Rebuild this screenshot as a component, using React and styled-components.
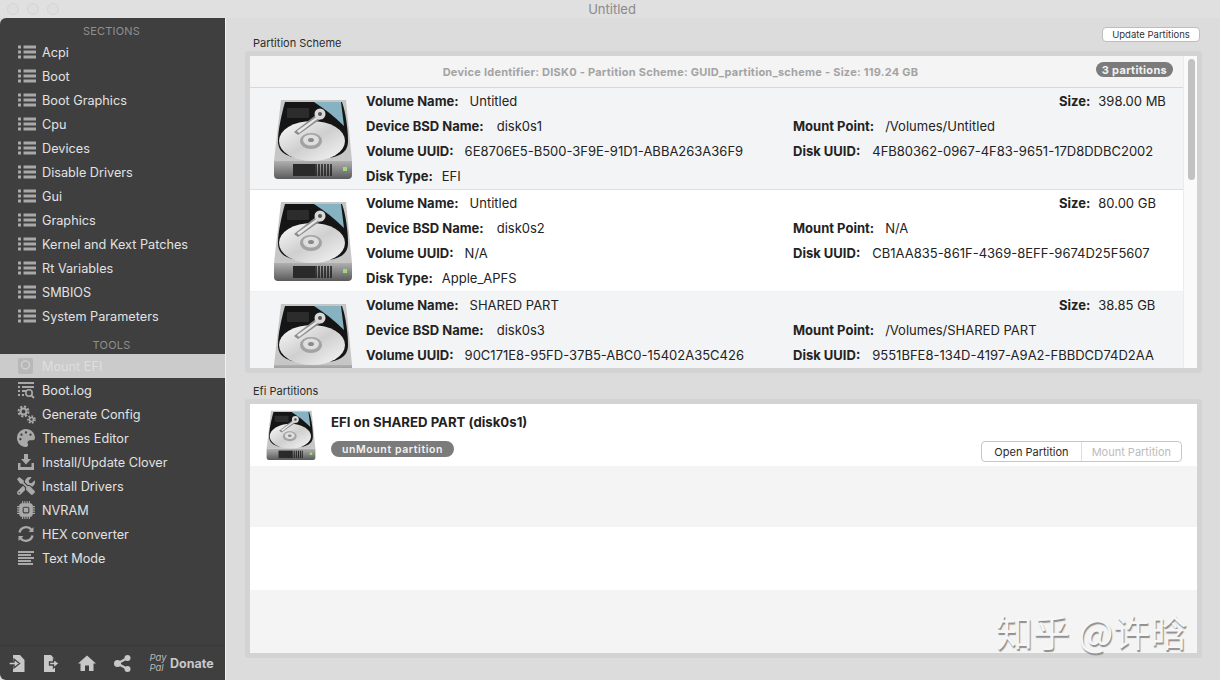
import React from 'react';
import styled, { createGlobalStyle } from 'styled-components';
import { FaPalette, FaTools } from 'react-icons/fa';
import { BsCpuFill } from 'react-icons/bs';

const GlobalStyle = createGlobalStyle`
  html, body {
    margin: 0;
    padding: 0;
    width: 100%;
    height: 100%;
    overflow: hidden;
    background: #dcdcdc;
  }
  * { box-sizing: border-box; }
`;

const Window = styled.div`
  width: 1220px;
  height: 680px;
  display: flex;
  flex-direction: column;
  position: relative;
  overflow: hidden;
  font-family: Inter, "Liberation Sans", sans-serif;
  color: #232323;
`;

const TitleBar = styled.div`
  height: 18px;
  flex: none;
  display: flex;
  align-items: center;
  justify-content: center;
  padding-left: 4px;
  position: relative;
  background: #e0e0e0;
  color: #8a8a8a;
  font-size: 13px;
`;

const Lights = styled.div`
  position: absolute;
  left: 7px;
  top: 3px;
  display: flex;
  gap: 8px;
`;

const Light = styled.span`
  width: 12px;
  height: 12px;
  border-radius: 50%;
  border: 1px solid #d4d4d4;
  background: #dedede;
`;

const Body = styled.div`
  flex: 1;
  display: flex;
  min-height: 0;
`;

const Sidebar = styled.aside`
  width: 226px;
  flex: none;
  display: flex;
  flex-direction: column;
  background: #3f3f3f;
  border-right: 1px solid #f0f0f0;
  border-radius: 6px 0 0 6px;
  color: #e4e4e4;
`;

const SideHead = styled.div`
  height: ${p => p.$h}px;
  display: flex;
  align-items: flex-end;
  justify-content: center;
  padding: 0 2px 2px 0;
  color: #8f8f8f;
  font-size: 11px;
  letter-spacing: 0.2px;
`;

const SideRow = styled.div`
  height: 24px;
  display: grid;
  grid-template-columns: 19px auto;
  align-items: center;
  justify-content: start;
  column-gap: 6px;
  padding-left: 17px;
  font-size: 12.7px;
  white-space: nowrap;
  background: ${p => (p.$active ? '#cbcbcb' : 'transparent')};
  color: ${p => (p.$active ? '#dedede' : '#e2e2e2')};
  svg { color: ${p => (p.$active ? '#b8b8b8' : '#a9a9a9')}; }
`;

const SideList = styled.div`
  flex: 1;
`;

const Footer = styled.div`
  height: 35px;
  flex: none;
  display: flex;
  align-items: center;
  gap: 15.5px;
  padding-left: 6px;
  border-top: 1px solid #383838;
  color: #c8c8c8;
`;

const FootIcon = styled.span`
  width: 20px;
  display: flex;
  justify-content: center;
`;

const PayPal = styled.span`
  width: 16px;
  margin-left: 1.5px;
  font-size: 9.5px;
  line-height: 10px;
  font-style: italic;
  color: #b8b8b8;
`;

const Donate = styled.span`
  margin-left: -11px;
  font-size: 12.5px;
  font-weight: 700;
`;

const Main = styled.main`
  flex: 1;
  min-width: 0;
  padding: 9px 18px 22px 19px;
  display: flex;
  flex-direction: column;
  background: #dcdcdc;
`;

const GroupHead = styled.div`
  height: ${p => p.$h}px;
  flex: none;
  display: flex;
  align-items: flex-end;
  justify-content: space-between;
  padding: 0 2px 1px 8px;
  font-size: 11px;
  color: #2c2c2c;
`;

const UpdateButton = styled.button`
  align-self: flex-start;
  height: 15px;
  width: 98px;
  padding: 0;
  border: 1px solid #bdbdbd;
  border-radius: 4px;
  background: #fff;
  color: #333;
  font: 9.5px Inter, "Liberation Sans", sans-serif;
`;

const GroupBox = styled.section`
  height: ${p => p.$h}px;
  flex: none;
  padding: 5px;
  border-radius: 3px;
  background: #d3d3d3;
  overflow: hidden;
`;

const Scroller = styled.div`
  height: 100%;
  display: flex;
  background: #fff;
  overflow: hidden;
`;

const TableColumn = styled.div`
  flex: 1;
  min-width: 0;
`;

const Banner = styled.div`
  height: 32px;
  display: flex;
  align-items: center;
  justify-content: center;
  padding-right: 72px;
  position: relative;
  background: #f4f4f4;
  border-bottom: 1px solid #d8d8d8;
  color: #a3a3a3;
  font-size: 11px;
  font-weight: 700;
  letter-spacing: 0.25px;
`;

const Badge = styled.span`
  display: inline-flex;
  align-items: center;
  border-radius: 8px;
  background: #7b7b7b;
  color: #f2f2f2;
  font-weight: 700;
`;

const CountBadge = styled(Badge)`
  position: absolute;
  right: 10px;
  top: 6px;
  height: 15px;
  padding: 0 6px;
  font-size: 11px;
  letter-spacing: 0.3px;
`;

const PartRow = styled.div`
  height: 102px;
  flex: none;
  display: flex;
  background: ${p => (p.$alt ? '#f3f4f5' : '#fff')};
  border-bottom: 1px solid ${p => (p.$alt ? '#dfdfdf' : '#f0f0f0')};
`;

const DiskCell = styled.div`
  width: 116px;
  flex: none;
  padding: 11px 0 0 23px;
`;

const Fields = styled.div`
  flex: 1;
  display: grid;
  grid-template-columns: 427px 1fr;
  grid-auto-rows: 25px;
  align-content: start;
  font-size: 13px;
  white-space: nowrap;
`;

const Field = styled.div`
  display: flex;
  align-items: center;
  gap: ${p => p.$gap || 11}px;
  padding-left: ${p => p.$indent || 0}px;
`;

const Label = styled.b`
  font-weight: 700;
`;

const ScrollTrack = styled.div`
  width: 14px;
  flex: none;
  padding: 3px 2px 0 4px;
  background: #fafafa;
  border-left: 1px solid #ececec;
`;

const ScrollThumb = styled.div`
  height: 121px;
  border-radius: 4px;
  background: #c2c2c2;
`;

const EfiList = styled.div`
  height: 100%;
  width: 100%;
  display: grid;
  grid-template-rows: 62px 61px 63px 63px;
  background: #fff;
`;

const EfiRow = styled.div`
  display: flex;
  align-items: flex-start;
  background: ${p => (p.$alt ? '#f4f4f5' : '#fff')};
`;

const EfiDisk = styled.div`
  width: 81px;
  flex: none;
  padding: 6px 0 0 16px;
`;

const EfiInfo = styled.div`
  flex: 1;
  display: flex;
  flex-direction: column;
  gap: 11px;
  padding-top: 10px;
`;

const EfiName = styled.div`
  font-size: 13.2px;
  font-weight: 700;
  line-height: 16px;
`;

const StateBadge = styled(Badge)`
  height: 16px;
  padding: 0 11px;
  font-size: 10.5px;
  font-weight: 600;
  letter-spacing: 0.6px;
  align-self: flex-start;
`;

const Segments = styled.div`
  display: flex;
  height: 21px;
  margin: 37px 15px 0 0;
  border: 1px solid #c6c6c6;
  border-radius: 4px;
  background: #fff;
  font-size: 11px;
`;

const Segment = styled.span`
  display: flex;
  align-items: center;
  padding: 0 ${p => (p.$off ? 10 : 12)}px 0 ${p => (p.$off ? 10 : 12)}px;
  color: ${p => (p.$off ? '#bcbcbc' : '#2a2a2a')};
  & + & { border-left: 1px solid #dedede; }
`;

const Watermark = styled.div`
  position: absolute;
  left: 996px;
  top: 608px;
  font-family: "Noto Sans CJK SC", sans-serif;
  font-size: 37px;
  line-height: 46px;
  color: #f6f6f6;
  text-shadow: 1px 2px 1px #8e8e8e;
  white-space: nowrap;
`;

// hard disk picture, shared by both lists
function DiskIcon({ size }) {
  return (
    <svg width={size} height={size} viewBox="0 0 80 80">
      <defs>
        <linearGradient id="platter" x1="0" y1="0" x2="1" y2="1">
          <stop offset="0" stopColor="#fbfbfb" />
          <stop offset="0.5" stopColor="#cfcfcf" />
          <stop offset="1" stopColor="#f7f7f7" />
        </linearGradient>
        <linearGradient id="front" x1="0" y1="0" x2="0" y2="1">
          <stop offset="0" stopColor="#b0b0b0" />
          <stop offset="1" stopColor="#5a5a5a" />
        </linearGradient>
      </defs>
      <path d="M8 1H73L79 62H1Z" fill="#c6c6c6" />
      <path d="M12 3H69C73 14 75 32 75 42C75 54 66 60 40 60C14 60 5 54 5 42C5 30 9 14 12 3Z" fill="#151515" />
      <path d="M41 3H68L71 27C62 18 52 10 41 3Z" fill="#86b2c2" />
      <rect x="14" y="9" width="22" height="10" rx="1" fill="#2c2c2c" />
      <ellipse cx="39" cy="42" rx="33" ry="20" fill="url(#platter)" />
      <ellipse cx="38" cy="42" rx="11" ry="8" fill="#a2a2a2" />
      <ellipse cx="38" cy="41" rx="8" ry="5.5" fill="#dedede" />
      <ellipse cx="38" cy="41" rx="3" ry="2" fill="#8a8a8a" />
      <path d="M21 33L44 15L49 19L25 36Z" fill="#8c8c8c" />
      <path d="M24 32L45 17L47 18L26 34Z" fill="#e8e8e8" />
      <circle cx="47" cy="15" r="5.5" fill="#d8d8d8" />
      <circle cx="47" cy="15" r="2" fill="#555" />
      <path d="M1 62H79V76Q79 80 75 80H5Q1 80 1 76Z" fill="url(#front)" />
      <rect x="20" y="65" width="22" height="12" fill="#2a2a2a" />
      <path d="M43 65v12M46 65v12M49 65v12M52 65v12M55 65v12M58 65v12" stroke="#1c1c1c" strokeWidth="1.5" />
      <rect x="70" y="68" width="4" height="4" fill="#9bdc78" />
    </svg>
  );
}

// sidebar icons the packages have no close match for
function ListIcon() {
  return (
    <svg width="19" height="14" viewBox="0 0 19 14" fill="currentColor">
      <path d="M1 0.5h3v3H1zM1 5.5h3v3H1zM1 10.5h3v3H1zM6.5 0.5H19v3H6.5zM6.5 5.5H19v3H6.5zM6.5 10.5H19v3H6.5z" />
    </svg>
  );
}

function MountIcon() {
  return (
    <svg width="17" height="18" viewBox="0 0 17 18">
      <rect x="1" y="1" width="15" height="16" rx="2" fill="currentColor" />
      <circle cx="8.5" cy="8" r="4" fill="none" stroke="#d0d0d0" strokeWidth="1.5" />
    </svg>
  );
}

function LogIcon() {
  return (
    <svg width="18" height="18" viewBox="0 0 18 18" fill="currentColor">
      <path d="M1 1h16v2H1zM1 5h2v2H1zM5 5h12v2H5zM1 9h2v2H1zM5 9h4v2H5zM1 13h2v2H1zM5 13h2v2H5z" />
      <circle cx="12" cy="12" r="3.2" fill="none" stroke="currentColor" strokeWidth="1.6" />
      <path d="M14.4 14.4L17 17" stroke="currentColor" strokeWidth="2" />
    </svg>
  );
}

function CogsIcon() {
  return (
    <svg width="19" height="19" viewBox="0 0 19 19" fill="none" stroke="currentColor">
      <circle cx="6.5" cy="6.5" r="3" strokeWidth="2" />
      <circle cx="6.5" cy="6.5" r="5" strokeWidth="2" strokeDasharray="2.2 1.7" />
      <circle cx="14.5" cy="14.5" r="2" strokeWidth="1.6" />
      <circle cx="14.5" cy="14.5" r="3.5" strokeWidth="1.6" strokeDasharray="1.8 1.4" />
    </svg>
  );
}

function InstallIcon() {
  return (
    <svg width="18" height="18" viewBox="0 0 18 18" fill="currentColor">
      <path d="M7 1h4v5h3l-5 5.5L4 6h3z" />
      <path d="M1 10h2.5v4h11v-4H17v7H1z" />
    </svg>
  );
}

function HexIcon() {
  return (
    <svg width="18" height="18" viewBox="0 0 18 18" fill="none" stroke="currentColor" strokeWidth="2.4">
      <path d="M2.5 7.5A6.8 6.8 0 0 1 14.5 4.8" />
      <path d="M15.5 10.5A6.8 6.8 0 0 1 3.5 13.2" />
      <path d="M16.5 2v5h-5z" fill="currentColor" stroke="none" />
      <path d="M1.5 16v-5h5z" fill="currentColor" stroke="none" />
    </svg>
  );
}

function TextIcon() {
  return (
    <svg width="18" height="16" viewBox="0 0 18 16" fill="currentColor">
      <path d="M1 1h16v2H1zM1 4h13v2H1zM1 7h16v2H1zM1 10h13v2H1zM1 13h15v2H1z" />
    </svg>
  );
}

function EnterFile() {
  return (
    <svg width="17" height="17" viewBox="0 0 17 17">
      <path d="M5 0H12L16.5 5V17H5Z" fill="currentColor" />
      <path d="M1 7H6V4L11.5 8.5L6 13V10H1Z" fill="currentColor" stroke="#3f3f3f" strokeWidth="1.3" />
    </svg>
  );
}

function ExitFile() {
  return (
    <svg width="17" height="17" viewBox="0 0 17 17">
      <path d="M1 0H8L12 4.5V17H1Z" fill="currentColor" />
      <path d="M6.5 7H10.5V4L16 8.5L10.5 13V10H6.5Z" fill="currentColor" stroke="#3f3f3f" strokeWidth="1.3" />
    </svg>
  );
}

function HomeIcon() {
  return (
    <svg width="18" height="16" viewBox="0 0 18 16" fill="currentColor">
      <path d="M9 0.5L18 8.5H15.5V16H11V10.5H7V16H2.5V8.5H0Z" />
    </svg>
  );
}

function ShareIcon() {
  return (
    <svg width="17" height="17" viewBox="0 0 17 17" fill="currentColor">
      <circle cx="13.5" cy="3" r="3" />
      <circle cx="13.5" cy="14" r="3" />
      <circle cx="3.5" cy="8.5" r="3.5" />
      <path d="M3.5 8.5L13.5 3M3.5 8.5L13.5 14" stroke="currentColor" strokeWidth="2.2" />
    </svg>
  );
}

const sections = ['Acpi', 'Boot', 'Boot Graphics', 'Cpu', 'Devices', 'Disable Drivers', 'Gui', 'Graphics',
  'Kernel and Kext Patches', 'Rt Variables', 'SMBIOS', 'System Parameters'];

const tools = [
  ['Mount EFI', <MountIcon />, true],
  ['Boot.log', <LogIcon />],
  ['Generate Config', <CogsIcon />],
  ['Themes Editor', <FaPalette size={18} />],
  ['Install/Update Clover', <InstallIcon />],
  ['Install Drivers', <FaTools size={18} />],
  ['NVRAM', <BsCpuFill size={18} />],
  ['HEX converter', <HexIcon />],
  ['Text Mode', <TextIcon />],
];

const partitions = [
  { name: 'Untitled', size: '398.00 MB', bsd: 'disk0s1', mount: '/Volumes/Untitled', uuid: '6E8706E5-B500-3F9E-91D1-ABBA263A36F9', disk: '4FB80362-0967-4F83-9651-17D8DDBC2002', type: 'EFI' },
  { name: 'Untitled', size: '80.00 GB', bsd: 'disk0s2', mount: 'N/A', uuid: 'N/A', disk: 'CB1AA835-861F-4369-8EFF-9674D25F5607', type: 'Apple_APFS' },
  { name: 'SHARED PART', size: '38.85 GB', bsd: 'disk0s3', mount: '/Volumes/SHARED PART', uuid: '90C171E8-95FD-37B5-ABC0-15402A35C426', disk: '9551BFE8-134D-4197-A9A2-FBBDCD74D2AA' },
];

function Partition({ part, alt }) {
  return (
    <PartRow $alt={alt}>
      <DiskCell><DiskIcon size={80} /></DiskCell>
      <Fields>
        <Field><Label>Volume Name:</Label>{part.name}</Field>
        <Field $indent={266} $gap={8}><Label>Size:</Label>{part.size}</Field>
        <Field $gap={13}><Label>Device BSD Name:</Label>{part.bsd}</Field>
        <Field><Label>Mount Point:</Label>{part.mount}</Field>
        <Field><Label>Volume UUID:</Label>{part.uuid}</Field>
        <Field $gap={12}><Label>Disk UUID:</Label>{part.disk}</Field>
        {part.type && <Field $gap={9}><Label>Disk Type:</Label>{part.type}</Field>}
      </Fields>
    </PartRow>
  );
}

export default function App() {
  return (
    <Window>
      <GlobalStyle />
      <TitleBar>
        <Lights><Light /><Light /><Light /></Lights>
        Untitled
      </TitleBar>
      <Body>
        <Sidebar>
          <SideList>
            <SideHead $h={22}>SECTIONS</SideHead>
            {sections.map(s => (
              <SideRow key={s}><ListIcon />{s}</SideRow>
            ))}
            <SideHead $h={26}>TOOLS</SideHead>
            {tools.map(([label, icon, active]) => (
              <SideRow key={label} $active={active}>{icon}{label}</SideRow>
            ))}
          </SideList>
          <Footer>
            <FootIcon><EnterFile /></FootIcon>
            <FootIcon><ExitFile /></FootIcon>
            <FootIcon><HomeIcon /></FootIcon>
            <FootIcon><ShareIcon /></FootIcon>
            <PayPal>Pay<br />Pal</PayPal>
            <Donate>Donate</Donate>
          </Footer>
        </Sidebar>
        <Main>
          <GroupHead $h={24}>
            Partition Scheme
            <UpdateButton>Update Partitions</UpdateButton>
          </GroupHead>
          <GroupBox $h={322}>
            <Scroller>
              <TableColumn>
                <Banner>
                  Device Identifier: DISK0 - Partition Scheme: GUID_partition_scheme - Size: 119.24 GB
                  <CountBadge>3 partitions</CountBadge>
                </Banner>
                {partitions.map((p, i) => <Partition key={p.bsd} part={p} alt={i % 2 === 0} />)}
              </TableColumn>
              <ScrollTrack><ScrollThumb /></ScrollTrack>
            </Scroller>
          </GroupBox>
          <GroupHead $h={26}>Efi Partitions</GroupHead>
          <GroupBox $h={259}>
            <EfiList>
              <EfiRow>
                <EfiDisk><DiskIcon size={50} /></EfiDisk>
                <EfiInfo>
                  <EfiName>EFI on SHARED PART (disk0s1)</EfiName>
                  <StateBadge>unMount partition</StateBadge>
                </EfiInfo>
                <Segments>
                  <Segment>Open Partition</Segment>
                  <Segment $off>Mount Partition</Segment>
                </Segments>
              </EfiRow>
              <EfiRow $alt />
              <EfiRow />
              <EfiRow $alt />
            </EfiList>
          </GroupBox>
        </Main>
      </Body>
      <Watermark>知乎 @许晗</Watermark>
    </Window>
  );
}
